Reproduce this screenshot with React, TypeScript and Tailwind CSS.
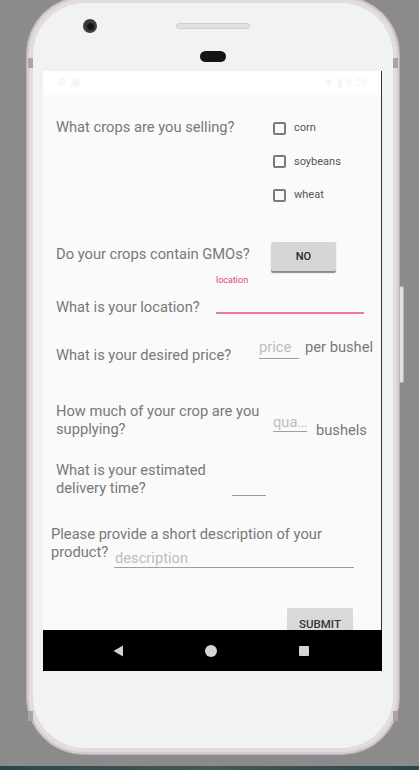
import React from "react";

const Check = ({ label }: { label: string }) => (
  <div className="flex h-[20px] items-center gap-[8px]">
    <div className="h-[13px] w-[13px] rounded-[2px] border-2 border-[#7a7a7a]" />
    <span className="text-[11px] text-[#555]">{label}</span>
  </div>
);

const Form = () => {
  return (
    <div className="flex shrink-0 flex-col pl-[13px] text-[14.7px] leading-[20px] text-[#787878]">
      {/* crops */}
      <div className="mt-[22px] flex items-start">
        <div className="w-[217px]">What crops are you selling?</div>
        <div className="mt-[1px] flex flex-col gap-[13.5px]">
          <Check label="corn" />
          <Check label="soybeans" />
          <Check label="wheat" />
        </div>
      </div>

      {/* gmo */}
      <div className="mt-[37px] flex items-start">
        <div className="mt-[2px] w-[215px]">Do your crops contain GMOs?</div>
        <button className="flex h-[29px] w-[65px] items-center justify-center rounded-[2px] bg-[#d6d6d6] text-[11px] font-medium text-[#2a2a2a] shadow-[0_2px_1px_rgba(0,0,0,0.45)]">
          NO
        </button>
      </div>

      {/* location */}
      <div className="mt-[3px] flex items-start">
        <div className="mt-[23px] w-[160px]">What is your location?</div>
        <div className="flex w-[148px] flex-col">
          <span className="text-[9px] leading-[12px] text-[#e2457d]">location</span>
          <div className="h-[26px]" />
          <div className="h-[2px] bg-[#ef7aa0]" />
        </div>
      </div>

      {/* price */}
      <div className="mt-[20px] flex items-start">
        <div className="mt-[8px] w-[203px]">What is your desired price?</div>
        <div className="flex w-[40px] flex-col">
          <span className="text-[#bdbdbd]">price</span>
          <div className="mt-[1px] h-[1px] bg-[#9e9e9e]" />
        </div>
        <span className="ml-[6px] whitespace-nowrap">per bushel</span>
      </div>

      {/* quantity */}
      <div className="mt-[37px] flex items-start">
        <div className="w-[217px] leading-[18px]">How much of your crop are you supplying?</div>
        <div className="mt-[11px] flex w-[34px] flex-col">
          <span className="overflow-hidden whitespace-nowrap leading-[18px] text-[#bdbdbd]">qua…</span>
          <div className="h-[1px] bg-[#9e9e9e]" />
        </div>
        <span className="ml-[9px] mt-[18px]">bushels</span>
      </div>

      {/* delivery */}
      <div className="mt-[21px] flex items-start">
        <div className="w-[176px] leading-[18px]">What is your estimated delivery time?</div>
        <div className="mt-[34px] h-[1px] w-[34px] bg-[#9e9e9e]" />
      </div>

      {/* description */}
      <div className="ml-[-5px] mt-[28px] flex flex-col leading-[18px]">
        <div className="whitespace-nowrap">Please provide a short description of your</div>
        <div className="flex items-start">
          <span className="w-[63px]">product?</span>
          <div className="mt-[6px] flex w-[240px] flex-col">
            <span className="pl-[1px] text-[#bdbdbd]">description</span>
            <div className="h-[1px] bg-[#9e9e9e]" />
          </div>
        </div>
      </div>

      {/* submit */}
      <button className="ml-[231px] mt-[40px] flex h-[32px] w-[66px] items-center justify-center rounded-[2px] bg-[#d9d9d9] text-[11.5px] font-medium text-[#333]">
        SUBMIT
      </button>
    </div>
  );
};

const App = () => {
  return (
    <div
      className="flex h-[770px] w-[419px] flex-col justify-between overflow-hidden bg-[#8b8b8b]"
      style={{ fontFamily: "Roboto, 'Noto Sans', sans-serif" }}
    >
      {/* phone */}
      <div className="relative ml-[26px] mt-[-4px] h-[759px] w-[374px] shrink-0 rounded-[58px] border border-[#b8b0b4] bg-[#e2dcdf] p-[6px] shadow-[inset_0_0_0_2px_#d3cbcf]">
        <div className="absolute right-[-5px] top-[289px] h-[97px] w-[5px] rounded-r-[2px] border border-[#bcb4b8] bg-[#e4dee1]" />
        <div className="absolute left-[1px] top-[61px] h-[10px] w-[5px] bg-[#a9a3a6]" />
        <div className="absolute right-[1px] top-[61px] h-[10px] w-[5px] bg-[#a9a3a6]" />
        <div className="absolute bottom-[33px] left-[1px] h-[10px] w-[5px] bg-[#a9a3a6]" />
        <div className="absolute bottom-[33px] right-[1px] h-[10px] w-[5px] bg-[#a9a3a6]" />

        <div className="flex h-full w-full flex-col rounded-[52px] bg-[#f1f2f4]">
          {/* top bezel */}
          <div className="flex h-[68px] shrink-0 flex-col">
            <div className="mt-[16px] flex items-center">
              <div className="ml-[50px] flex h-[14px] w-[14px] items-center justify-center rounded-full bg-[#3b3b3b]">
                <div className="h-[7px] w-[7px] rounded-full bg-[#161616]" />
              </div>
              <div className="ml-[79px] h-[6px] w-[74px] rounded-full border border-[#cfcfcf] bg-[#e2e2e4]" />
            </div>
            <div className="ml-[167px] mt-[18px] h-[11px] w-[26px] rounded-full bg-[#151515]" />
          </div>

          {/* screen */}
          <div className="ml-[10px] flex h-[600px] w-[339px] shrink-0 flex-col">
            <div className="flex min-h-0 flex-1 flex-col overflow-hidden border-r border-[#333] bg-[#fafafa]">
              <div className="flex h-[24px] shrink-0 items-center justify-between bg-white px-[14px] text-[11px] text-[#f5f5f5]">
                <span>⚙ ▣</span>
                <span>▼ ▮ 8:28</span>
              </div>
              <Form />
            </div>
            <div className="flex h-[41px] shrink-0 items-center bg-black pl-[69px]">
              <svg width="12" height="12" viewBox="0 0 12 12">
                <path d="M11 0.5 L11 11.5 L1.5 6 Z" fill="#d4d4d4" />
              </svg>
              <div className="ml-[81px] h-[12px] w-[12px] rounded-full bg-[#d4d4d4]" />
              <div className="ml-[82px] h-[10px] w-[10px] rounded-[1px] bg-[#d4d4d4]" />
            </div>
          </div>
        </div>
      </div>

      <div className="h-[4px] shrink-0 bg-gradient-to-r from-[#2c4650] via-[#3d5a5c] to-[#2c4650]" />
    </div>
  );
};

export default App;
